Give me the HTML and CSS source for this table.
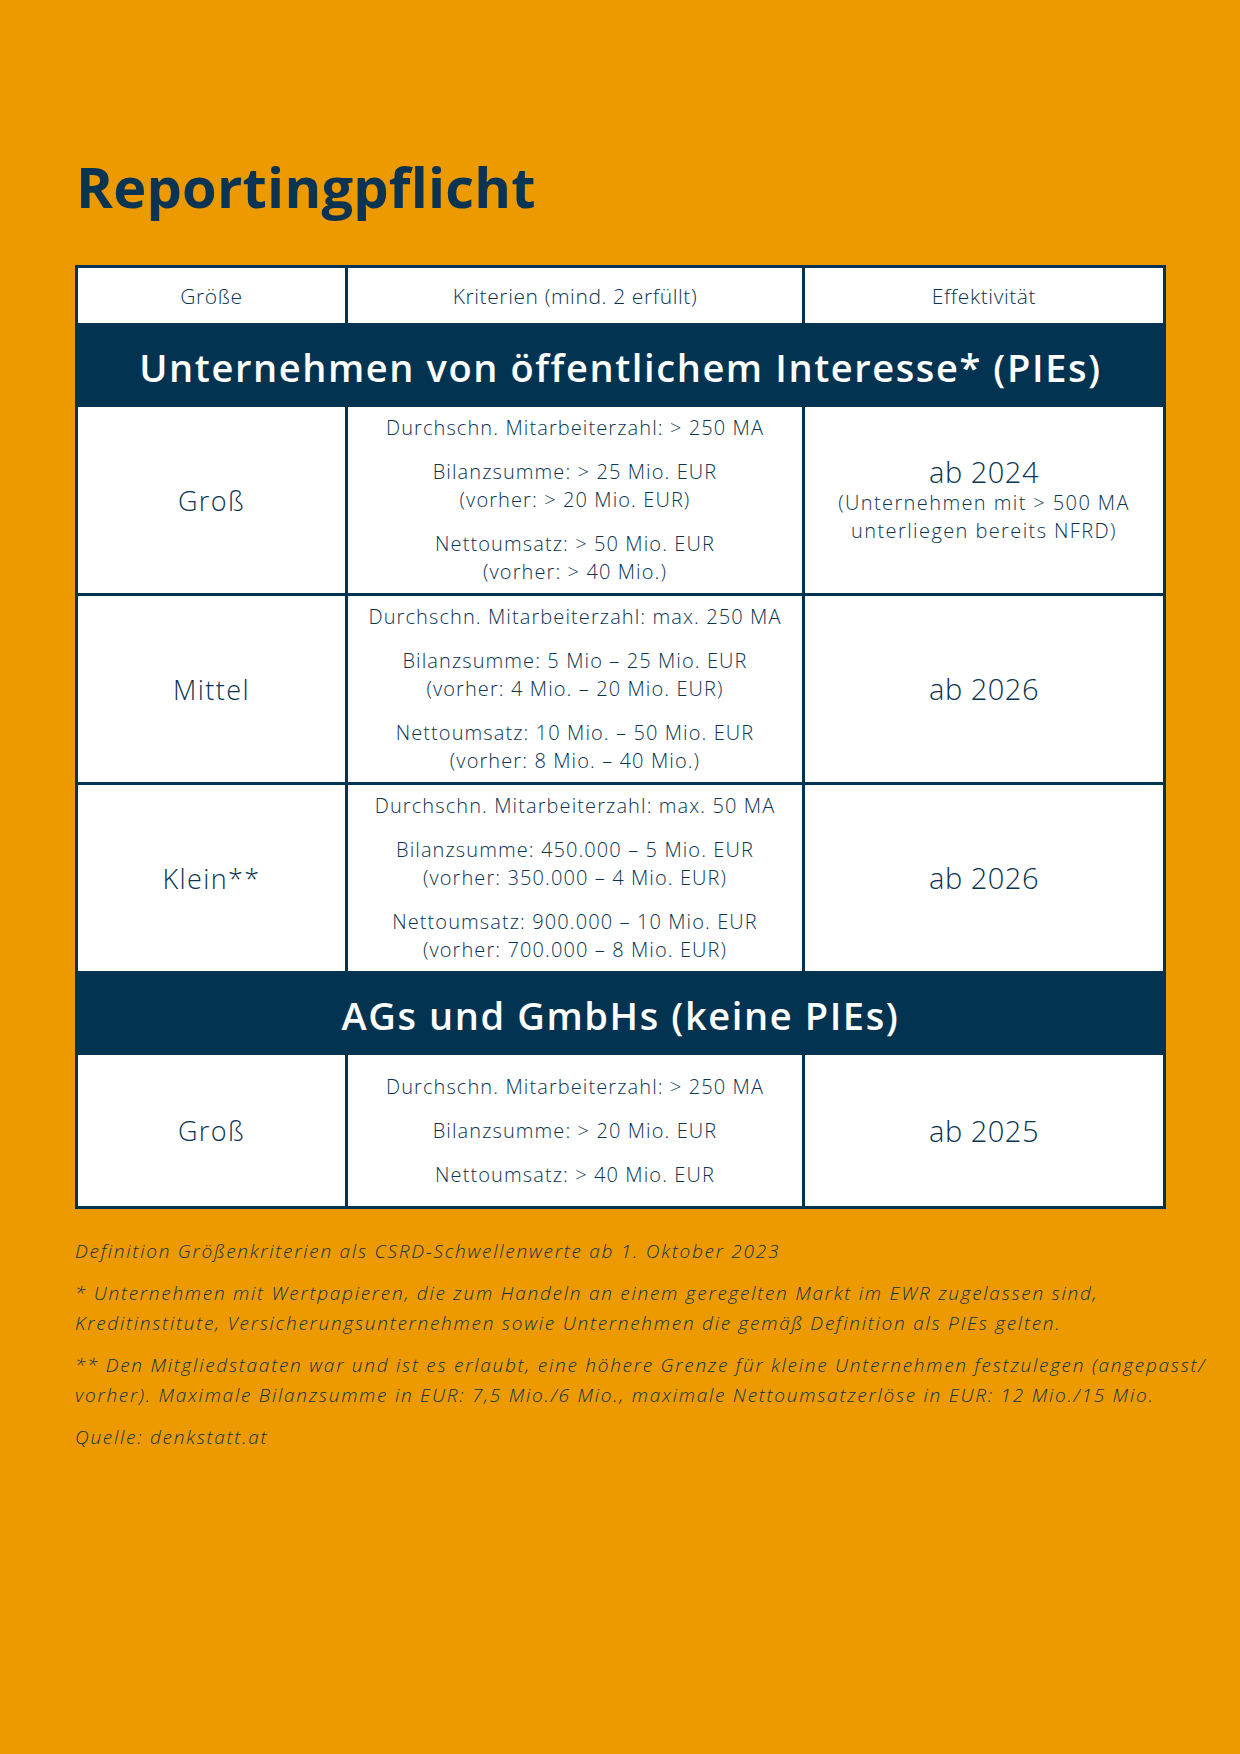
FILE: index.html
```html
<!DOCTYPE html>
<html lang="de">
<head>
<meta charset="utf-8">
<title>Reportingpflicht</title>
<link rel="stylesheet" href="styles.css">
</head>
<body>
<div class="page">
  <h1 class="title">Reportingpflicht</h1>
  <div class="table">
    <div class="cell head">Größe</div>
    <div class="cell head">Kriterien (mind. 2 erfüllt)</div>
    <div class="cell head">Effektivität</div>

    <div class="band">Unternehmen von öffentlichem Interesse* (PIEs)</div>

    <div class="cell size">Groß</div>
    <div class="cell crit">
      <p>Durchschn. Mitarbeiterzahl: &gt; 250 MA</p>
      <p>Bilanzsumme: &gt; 25 Mio. EUR<br>(vorher: &gt; 20 Mio. EUR)</p>
      <p>Nettoumsatz: &gt; 50 Mio. EUR<br>(vorher: &gt; 40 Mio.)</p>
    </div>
    <div class="cell eff">
      <span class="year">ab 2024</span>
      <span class="note">(Unternehmen mit &gt; 500 MA<br>unterliegen bereits NFRD)</span>
    </div>

    <div class="cell size">Mittel</div>
    <div class="cell crit">
      <p>Durchschn. Mitarbeiterzahl: max. 250 MA</p>
      <p>Bilanzsumme: 5 Mio – 25 Mio. EUR<br>(vorher: 4 Mio. – 20 Mio. EUR)</p>
      <p>Nettoumsatz: 10 Mio. – 50 Mio. EUR<br>(vorher: 8 Mio. – 40 Mio.)</p>
    </div>
    <div class="cell eff"><span class="year">ab 2026</span></div>

    <div class="cell size">Klein**</div>
    <div class="cell crit">
      <p>Durchschn. Mitarbeiterzahl: max. 50 MA</p>
      <p>Bilanzsumme: 450.000 – 5 Mio. EUR<br>(vorher: 350.000 – 4 Mio. EUR)</p>
      <p>Nettoumsatz: 900.000 – 10 Mio. EUR<br>(vorher: 700.000 – 8 Mio. EUR)</p>
    </div>
    <div class="cell eff"><span class="year">ab 2026</span></div>

    <div class="band">AGs und GmbHs (keine PIEs)</div>

    <div class="cell size last">Groß</div>
    <div class="cell crit last">
      <p>Durchschn. Mitarbeiterzahl: &gt; 250 MA</p>
      <p>Bilanzsumme: &gt; 20 Mio. EUR</p>
      <p>Nettoumsatz: &gt; 40 Mio. EUR</p>
    </div>
    <div class="cell eff last"><span class="year">ab 2025</span></div>
  </div>

  <div class="notes">
    <p>Definition Größenkriterien als CSRD-Schwellenwerte ab 1. Oktober 2023</p>
    <p>* Unternehmen mit Wertpapieren, die zum Handeln an einem geregelten Markt im EWR zugelassen sind,<br>Kreditinstitute, Versicherungsunternehmen sowie Unternehmen die gemäß Definition als PIEs gelten.</p>
    <p>** Den Mitgliedstaaten war und ist es erlaubt, eine höhere Grenze für kleine Unternehmen festzulegen (angepasst/<br>vorher). Maximale Bilanzsumme in EUR: 7,5 Mio./6 Mio., maximale Nettoumsatzerlöse in EUR: 12 Mio./15 Mio.</p>
    <p>Quelle: denkstatt.at</p>
  </div>
</div>
</body>
</html>
```

FILE: styles.css
```css
html, body {
  margin: 0;
  padding: 0;
}
body {
  background: #ed9a00;
  color: #0a3452;
  font-family: "Open Sans", "Lato", sans-serif;
  width: 1240px;
  height: 1754px;
}
.page {
  padding: 0 0 0 75px;
}
.title {
  margin: 0;
  padding: 150px 0 0 1px;
  font-family: "Open Sans", sans-serif;
  font-weight: 700;
  font-size: 56px;
  letter-spacing: 0.2px;
  line-height: 72px;
  color: #0a3452;
  box-sizing: border-box;
  height: 265px;
}
.table {
  width: 1091px;
  box-sizing: border-box;
  display: grid;
  grid-template-columns: 267px 454px 358px;
  gap: 3px;
  background: #023452;
  border: 3px solid #023452;
}
.cell {
  background: #fff;
  display: flex;
  flex-direction: column;
  align-items: center;
  justify-content: center;
  text-align: center;
  height: 186px;
  font-weight: 300;
}
.head {
  height: 55px;
  font-size: 21px;
  letter-spacing: 0.6px;
}
.band {
  grid-column: 1 / -1;
  height: 78px;
  display: flex;
  align-items: center;
  justify-content: center;
  color: #fff;
  font-family: "Open Sans", sans-serif;
  font-weight: 600;
  font-size: 38px;
  letter-spacing: 1.6px;
  padding-top: 3px;
  box-sizing: border-box;
}
.size {
  font-size: 27px;
  letter-spacing: 1.4px;
}
.crit {
  font-size: 20px;
  letter-spacing: 1.1px;
  line-height: 28px;
  gap: 16px;
}
.crit p {
  margin: 0;
}
.eff .year {
  font-size: 29px;
  letter-spacing: 0.5px;
  line-height: 34px;
}
.eff .note {
  font-size: 20px;
  letter-spacing: 1.4px;
  line-height: 28px;
}
.last {
  height: 151px;
}
.notes {
  width: 1130px;
  padding-top: 27px;
  font-style: italic;
  font-weight: 300;
  font-size: 19px;
  letter-spacing: 1.75px;
  line-height: 30px;
  white-space: nowrap;
}
.notes p {
  margin: 0 0 12px 0;
}
```
